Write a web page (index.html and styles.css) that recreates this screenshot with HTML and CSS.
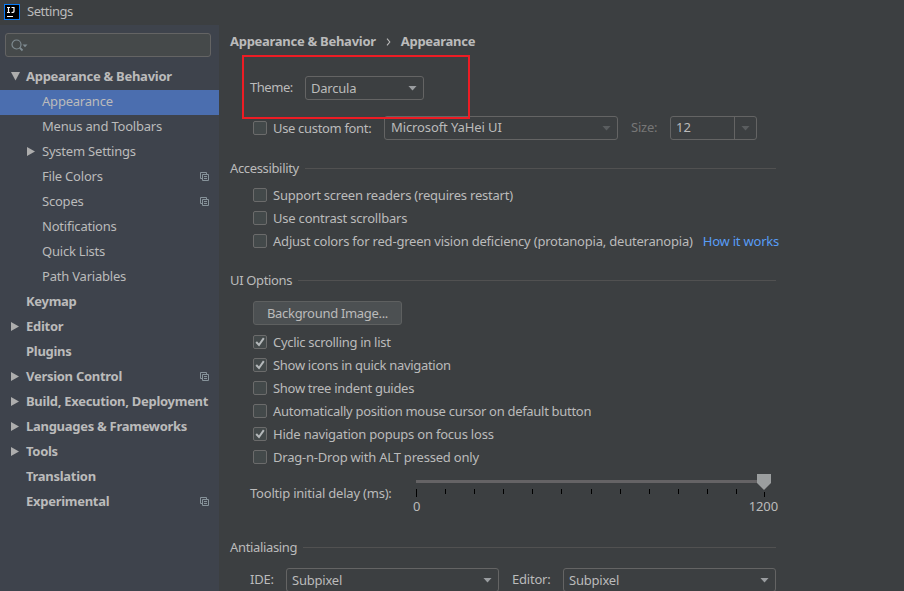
FILE: index.html
```
<!DOCTYPE html>
<html lang="en">

<head>
    <meta charset="UTF-8">
    <title>Settings</title>
    <link rel="stylesheet" href="styles.css">
</head>

<body>
    <svg class="symbols" width="0" height="0">
        <symbol id="copy" viewBox="0 0 9 9">
            <path d="M2 6.5H.5V.5H6.5V2M2.5 2.5H8.5V8.5H2.5ZM4 4.5H7M4 6.5H7" fill="none" stroke="#87939a" />
        </symbol>
        <symbol id="check" viewBox="0 0 14 14">
            <path d="M3.2 7L6 10L10.8 3.2" fill="none" stroke="#b4b8ba" stroke-width="2" />
        </symbol>
    </svg>

    <div class="titlebar">
        <svg class="logo" width="16" height="16" viewBox="0 0 16 16">
            <rect x=".5" y=".5" width="15" height="15" fill="#000" stroke="#087cfa" />
            <path d="M3 3.5H6M4.5 3.5V8.5M3 8.5H6M7.5 3.5H10V7.5Q10 8.5 7.5 8.5M3 12.5H9" fill="none" stroke="#fff" stroke-width="1.2" />
        </svg>
        <span>Settings</span>
    </div>

    <div class="window">
        <div class="sidebar">
            <div class="search">
                <svg width="18" height="14" viewBox="0 0 18 14">
                    <circle cx="5.5" cy="5.5" r="4.5" fill="none" stroke="#7f8b91" stroke-width="1.2" />
                    <path d="M8.7 8.7L11.5 11.5" stroke="#7f8b91" stroke-width="1.8" />
                    <path d="M11.5 5.5H16.5L14 8.2Z" fill="#7f8b91" />
                </svg>
            </div>
            <ul class="tree">
                <li class="group open"><span>Appearance &amp; Behavior</span></li>
                <li class="child selected"><span>Appearance</span></li>
                <li class="child"><span>Menus and Toolbars</span></li>
                <li class="child closed"><span>System Settings</span></li>
                <li class="child"><span>File Colors</span><svg class="copy"><use href="#copy" /></svg></li>
                <li class="child"><span>Scopes</span><svg class="copy"><use href="#copy" /></svg></li>
                <li class="child"><span>Notifications</span></li>
                <li class="child"><span>Quick Lists</span></li>
                <li class="child"><span>Path Variables</span></li>
                <li class="group"><span>Keymap</span></li>
                <li class="group closed"><span>Editor</span></li>
                <li class="group"><span>Plugins</span></li>
                <li class="group closed"><span>Version Control</span><svg class="copy"><use href="#copy" /></svg></li>
                <li class="group closed"><span>Build, Execution, Deployment</span></li>
                <li class="group closed"><span>Languages &amp; Frameworks</span></li>
                <li class="group closed"><span>Tools</span></li>
                <li class="group"><span>Translation</span></li>
                <li class="group"><span>Experimental</span><svg class="copy"><use href="#copy" /></svg></li>
            </ul>
        </div>

        <div class="content">
            <div class="highlight"></div>

            <div class="breadcrumb">
                <span>Appearance &amp; Behavior</span>
                <svg width="5" height="8" viewBox="0 0 5 8"><path d="M1 .7L3.8 4L1 7.3" fill="none" stroke="#bbb" stroke-width="1.1" /></svg>
                <span>Appearance</span>
            </div>

            <div class="row theme">
                <span class="label">Theme:</span>
                <div class="combo"><span>Darcula</span></div>
            </div>

            <div class="row font">
                <div class="check"><i class="box"></i><span>Use custom font:</span></div>
                <div class="combo disabled family"><span>Microsoft YaHei UI</span></div>
                <span class="size-label">Size:</span>
                <div class="combo disabled size"><span>12</span></div>
            </div>

            <div class="section access"><span>Accessibility</span></div>
            <div class="checks">
                <div class="check"><i class="box"></i><span>Support screen readers (requires restart)</span></div>
                <div class="check"><i class="box"></i><span>Use contrast scrollbars</span></div>
                <div class="check"><i class="box"></i><span>Adjust colors for red-green vision deficiency (protanopia, deuteranopia)</span><a class="link">How it works</a></div>
            </div>

            <div class="section ui"><span>UI Options</span></div>
            <button class="button">Background Image...</button>
            <div class="checks options">
                <div class="check tight"><i class="box"><svg><use href="#check" /></svg></i><span>Cyclic scrolling in list</span></div>
                <div class="check tight"><i class="box"><svg><use href="#check" /></svg></i><span>Show icons in quick navigation</span></div>
                <div class="check tight"><i class="box"></i><span>Show tree indent guides</span></div>
                <div class="check tight"><i class="box"></i><span>Automatically position mouse cursor on default button</span></div>
                <div class="check"><i class="box"><svg><use href="#check" /></svg></i><span>Hide navigation popups on focus loss</span></div>
                <div class="check"><i class="box"></i><span>Drag-n-Drop with ALT pressed only</span></div>
            </div>

            <div class="delay">
                <span class="delay-label">Tooltip initial delay (ms):</span>
                <div class="slider">
                    <svg width="358" height="24" viewBox="0 0 358 24">
                        <path d="M0 7.5H350" stroke="#656365" stroke-width="3" />
                        <path d="M.5 15V23M348.5 18V23" stroke="#000" />
                        <path d="M29.5 15V20M58.5 15V20M87.5 15V20M116.5 15V20M145.5 15V20M175.5 15V20M204.5 15V20M233.5 15V20M262.5 15V20M291.5 15V20M320.5 15V20" stroke="#000" />
                        <path d="M341 0H355V9L348 16L341 9Z" fill="#9b9e9f" />
                    </svg>
                    <div class="scale"><span>0</span><span>1200</span></div>
                </div>
            </div>

            <div class="section anti"><span>Antialiasing</span></div>
            <div class="row aliasing">
                <span class="label">IDE:</span>
                <div class="combo"><span>Subpixel</span></div>
                <span class="label editor">Editor:</span>
                <div class="combo"><span>Subpixel</span></div>
            </div>
        </div>
    </div>
</body>

</html>
```
FILE: styles.css
```
* {
    box-sizing: border-box;
}

body {
    margin: 0;
    height: 591px;
    overflow: hidden;
    background: #3c3f41;
    color: #bbbbbb;
    font-family: "Noto Sans", "Open Sans", sans-serif;
    font-size: 13px;
    line-height: 18px;
    letter-spacing: -0.21px;
    white-space: nowrap;
}

svg {
    display: block;
    flex: none;
}

.symbols {
    position: absolute;
}

.titlebar {
    display: flex;
    align-items: center;
    gap: 7px;
    height: 25px;
    padding: 0 0 1px 4px;
    letter-spacing: -0.45px;
}

.titlebar span {
    margin-bottom: 2px;
}

.window {
    display: flex;
    height: 566px;
}

/* left side */
.sidebar {
    width: 219px;
    flex: none;
    padding-top: 8px;
    background: #3e434c;
}

.search {
    width: 206px;
    height: 24px;
    margin-left: 5px;
    padding: 5px 0 0 5px;
    border: 1px solid #646464;
    border-radius: 3px;
    background: #45494a;
}

.tree {
    list-style: none;
    margin: 8px 0 0;
    padding: 0;
}

.tree li {
    display: flex;
    align-items: center;
    height: 25px;
    padding: 0 10px 2px 0;
}

.tree li::before {
    content: "";
    width: 9px;
    height: 9px;
    margin-right: 7px;
    flex: none;
}

.tree span {
    margin-bottom: 2px;
}

.tree .group {
    padding-left: 10px;
    font-weight: bold;
    letter-spacing: -0.28px;
}

.tree .child {
    padding-left: 26px;
}

.tree .selected {
    background: #4b6eaf;
}

.tree .closed::before {
    background: #adadad;
    clip-path: polygon(11% 0, 100% 50%, 11% 100%);
}

.tree .open::before {
    margin: 0 6px 0 1px;
    background: #adadad;
    clip-path: polygon(0 0, 100% 0, 50% 95%);
}

.copy {
    width: 9px;
    height: 9px;
    margin-left: auto;
}

/* right side */
.content {
    position: relative;
    flex: 1;
    padding-left: 11px;
}

.highlight {
    position: absolute;
    z-index: 1;
    left: 23px;
    top: 30px;
    width: 228px;
    height: 64px;
    border: 2px solid #ed1c24;
}

.breadcrumb {
    display: flex;
    align-items: center;
    gap: 10px;
    height: 33px;
    font-weight: bold;
    letter-spacing: -0.28px;
}

.breadcrumb span {
    margin-bottom: 2px;
}

.row {
    display: flex;
    align-items: center;
    height: 24px;
}

.label {
    margin-bottom: 2px;
}

.combo {
    display: flex;
    align-items: center;
    justify-content: space-between;
    height: 24px;
    padding: 0 6px 0 5px;
    border: 1px solid #646464;
    border-radius: 3px;
}

.combo::after {
    content: "";
    width: 9px;
    height: 5px;
    background: #9a9da0;
    clip-path: polygon(0 0, 100% 0, 50% 100%);
}

.combo.disabled::after {
    background: #5a5d5f;
}

.theme {
    margin-top: 18px;
    padding-left: 20px;
}

.theme .label {
    width: 55px;
    letter-spacing: -0.45px;
}

.theme .combo {
    width: 119px;
}

.font {
    margin-top: 16px;
    padding-left: 23px;
}

.font .check {
    width: 131px;
    letter-spacing: -0.33px;
}

.family {
    width: 234px;
    padding-left: 6px;
    letter-spacing: -0.1px;
}

.family span {
    margin-bottom: 2px;
}

.size-label {
    width: 39px;
    margin: 0 0 2px 13px;
    color: #777777;
}

.size {
    width: 87px;
}

.size span {
    width: 59px;
    height: 22px;
    line-height: 20px;
    letter-spacing: 0;
    border-right: 1px solid #646464;
}

.section {
    display: flex;
    align-items: center;
    gap: 6px;
    width: 546px;
    height: 18px;
    letter-spacing: -0.35px;
}

.section::after {
    content: "";
    flex: 1;
    height: 1px;
    background: #515151;
}

.access {
    margin-top: 19px;
}

.checks {
    padding: 6px 0 0 23px;
}

.check {
    display: flex;
    align-items: center;
    height: 23px;
}

.tight {
    letter-spacing: -0.3px;
}

.box {
    width: 14px;
    height: 14px;
    margin-right: 6px;
    flex: none;
    border: 1px solid #6b6b6b;
    border-radius: 2px;
    background: #43494a;
}

.box svg {
    width: 14px;
    height: 14px;
    margin: -1px;
}

.link {
    margin-left: 10px;
    color: #589df6;
}

.ui {
    margin-top: 19px;
}

.button {
    display: block;
    width: 149px;
    height: 24px;
    margin: 12px 0 0 23px;
    padding: 0;
    border: 1px solid #5e6060;
    border-radius: 3px;
    background: #4c5052;
    color: inherit;
    font: inherit;
    letter-spacing: -0.31px;
}

.options {
    padding-top: 5px;
}

.delay {
    display: flex;
    padding: 6px 0 0 20px;
}

.delay-label {
    width: 166px;
    padding-top: 10px;
}

.slider {
    width: 358px;
}

.scale {
    display: flex;
    justify-content: space-between;
    width: 365px;
    margin: -1px 0 1px -3px;
    letter-spacing: -0.1px;
}

.anti {
    margin-top: 22px;
}

.aliasing {
    margin-top: 12px;
    padding-left: 20px;
}

.aliasing .label {
    width: 36px;
}

.aliasing .editor {
    width: 51px;
    margin-left: 13px;
}

.aliasing .combo {
    width: 213px;
}
```
